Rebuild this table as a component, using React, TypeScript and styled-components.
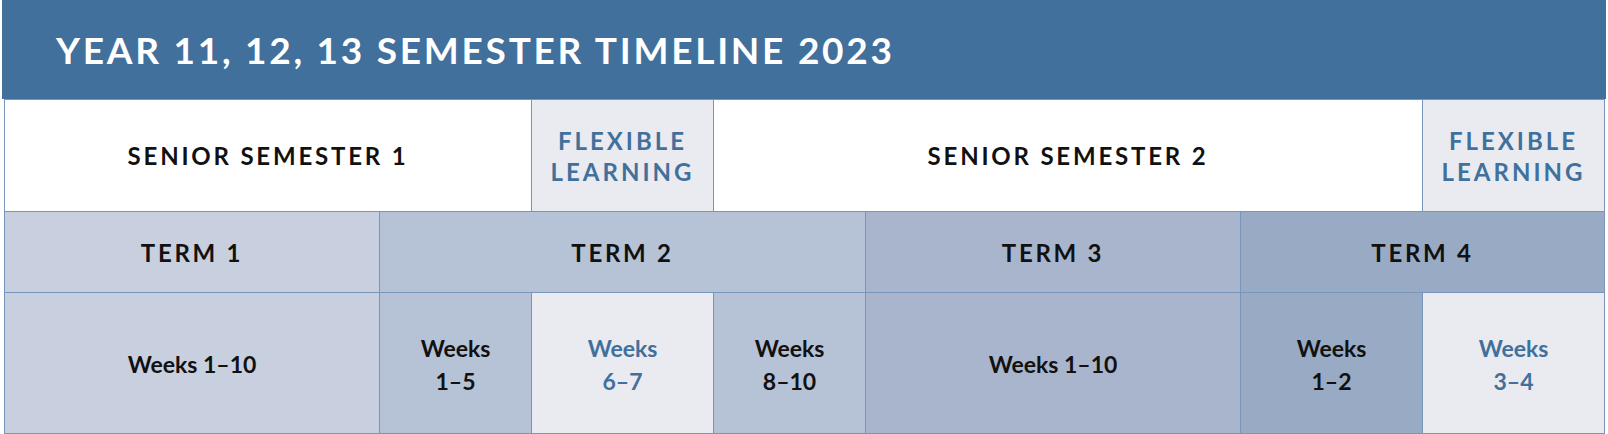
import React from 'react';
import styled, { createGlobalStyle } from 'styled-components';

const GlobalStyle = createGlobalStyle`
  html, body {
    margin: 0;
    padding: 0;
    background: #ffffff;
  }
  body {
    font-family: Lato, "Open Sans", "Liberation Sans", sans-serif;
  }
`;

const LINE = '#7896bb';
const BLUE = '#41709c';

const Page = styled.div`
  padding: 0 2px;
  width: 1604px;
`;

const Banner = styled.header`
  height: 99px;
  background: ${BLUE};
  display: flex;
  align-items: center;
  padding-left: 54px;
  box-sizing: border-box;
`;

const Title = styled.h1`
  margin: 0;
  color: #ffffff;
  font-size: 37px;
  font-weight: 700;
  letter-spacing: 2.75px;
  line-height: 1;
`;

const Table = styled.div`
  margin-left: 2px;
  display: grid;
  grid-template-columns: 375px 152px 182px 152px 375px 182px 182px;
  grid-template-rows: 112px 81px 141px;
  border-left: 1px solid ${LINE};
  border-top: 1px solid ${LINE};
  width: 1601px;
  box-sizing: border-box;
`;

const Cell = styled.div<{ $bg: string; $span?: number; $flex?: boolean }>`
  grid-column: span ${(p) => p.$span ?? 1};
  background: ${(p) => p.$bg};
  border-right: 1px solid ${LINE};
  border-bottom: 1px solid ${LINE};
  display: flex;
  align-items: center;
  justify-content: center;
  text-align: center;
  color: ${(p) => (p.$flex ? BLUE : '#111111')};
`;

const Label = styled.span<{ $spacing?: number }>`
  font-size: 24px;
  font-weight: 700;
  letter-spacing: ${(p) => p.$spacing ?? 2.8}px;
  line-height: 31px;
  text-transform: uppercase;
`;

const Weeks = styled.span`
  font-size: 23px;
  font-weight: 700;
  line-height: 33px;
  padding-top: 3px;
`;

const C = {
  white: '#ffffff',
  flex: '#e9ebf1',
  t1: '#c8cfdf',
  t2: '#b6c2d5',
  t3: '#a9b5cc',
  t4: '#99aac4',
};

const App = () => {
  return (
    <Page>
      <GlobalStyle />
      <Banner>
        <Title>YEAR 11, 12, 13 SEMESTER TIMELINE 2023</Title>
      </Banner>
      <Table>
        <Cell $bg={C.white} $span={2}>
          <Label>Senior Semester 1</Label>
        </Cell>
        <Cell $bg={C.flex} $flex>
          <Label $spacing={3}>
            Flexible
            <br />
            Learning
          </Label>
        </Cell>
        <Cell $bg={C.white} $span={3}>
          <Label>Senior Semester 2</Label>
        </Cell>
        <Cell $bg={C.flex} $flex>
          <Label $spacing={3}>
            Flexible
            <br />
            Learning
          </Label>
        </Cell>

        <Cell $bg={C.t1}>
          <Label $spacing={2.7}>Term 1</Label>
        </Cell>
        <Cell $bg={C.t2} $span={3}>
          <Label $spacing={2.7}>Term 2</Label>
        </Cell>
        <Cell $bg={C.t3}>
          <Label $spacing={2.7}>Term 3</Label>
        </Cell>
        <Cell $bg={C.t4} $span={2}>
          <Label $spacing={2.7}>Term 4</Label>
        </Cell>

        <Cell $bg={C.t1}>
          <Weeks>Weeks 1–10</Weeks>
        </Cell>
        <Cell $bg={C.t2}>
          <Weeks>
            Weeks
            <br />
            1–5
          </Weeks>
        </Cell>
        <Cell $bg={C.flex} $flex>
          <Weeks>
            Weeks
            <br />
            6–7
          </Weeks>
        </Cell>
        <Cell $bg={C.t2}>
          <Weeks>
            Weeks
            <br />
            8–10
          </Weeks>
        </Cell>
        <Cell $bg={C.t3}>
          <Weeks>Weeks 1–10</Weeks>
        </Cell>
        <Cell $bg={C.t4}>
          <Weeks>
            Weeks
            <br />
            1–2
          </Weeks>
        </Cell>
        <Cell $bg={C.flex} $flex>
          <Weeks>
            Weeks
            <br />
            3–4
          </Weeks>
        </Cell>
      </Table>
    </Page>
  );
};

export default App;
